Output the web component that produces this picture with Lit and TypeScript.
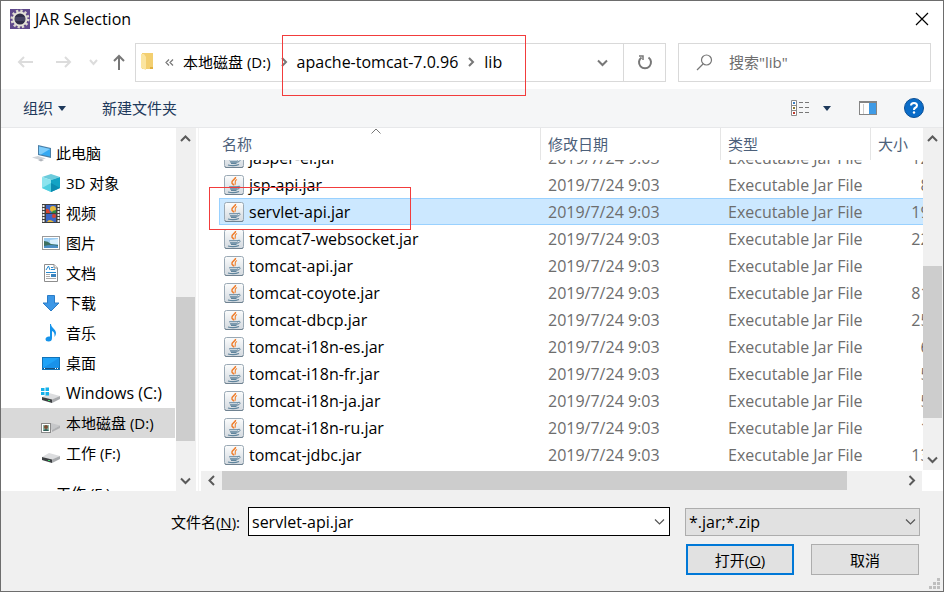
import { LitElement, html, css, svg } from "lit";
import { customElement } from "lit/decorators.js";
import { classMap } from "lit/directives/class-map.js";

const chevron = (d: string) =>
  html`<svg width="13" height="13" viewBox="0 0 13 13" fill="none" stroke="currentColor" stroke-width="2"><path d=${d} /></svg>`;

const UP = "M2 9 L6.5 4.5 L11 9";
const DOWN = "M2 4.5 L6.5 9 L11 4.5";
const LEFT = "M9 2 L4.5 6.5 L9 11";
const RIGHT = "M4.5 2 L9 6.5 L4.5 11";

const drive = svg`
  <path d="M0 13 L7 9 L18 12 L10 16 Z" fill="#dcdddf"/>
  <path d="M0 13 L10 15.5 V19 L0 16 Z" fill="#3d4043"/>
  <path d="M10 15.5 L18 12 V15 L10 19 Z" fill="#a9abae"/>
  <rect x="6" y="16" width="2" height="1" fill="#3fd46c"/>`;

const icons: Record<string, unknown> = {
  pc: svg`
    <path d="M6 1 L19 4 V14 L6 11 Z" fill="#4c7fa6"/>
    <path d="M7 2.5 L18 5 V12.5 L7 10 Z" fill="#35a9f2"/>
    <path d="M7 2.5 L18 5 L9 10.5 L7 10 Z" fill="#7fcdfb"/>
    <path d="M0 13.5 L6 12 L14 14.5 L8 16 Z" fill="#cfd3d8"/>
    <path d="M6 16 L9 15 L12 16 L9 17.5 Z" fill="#b0b4ba"/>`,
  cube: svg`
    <path d="M9 0 L18 3 L9 6 L0 3 Z" fill="#6ccbdc"/>
    <path d="M0 3 L9 6 V18 L0 14 Z" fill="#8ce4ee"/>
    <path d="M0 14 L9 9 V18 Z" fill="#4fcfe0"/>
    <path d="M9 6 L18 3 V14 L9 18 Z" fill="#12a3c4"/>
    <path d="M9 9 L18 14 L9 18 Z" fill="#0b8bb0"/>`,
  film: svg`
    <rect width="18" height="19" fill="#3f3f3f"/>
    <path d="M1.5 1V19M16.5 1V19" stroke="#f2f2f2" stroke-width="2" stroke-dasharray="2 1"/>
    <rect x="4" y="1" width="10" height="8" fill="#3c66c4"/>
    <rect x="4" y="10" width="10" height="8" fill="#3c66c4"/>
    <path d="M4 5 Q7 4 8 9 H4Z" fill="#d9432f"/>
    <circle cx="11" cy="5" r="3" fill="#e5b83a"/>
    <path d="M9 9H14V6Q11 6 9 9Z" fill="#2e8a45"/>
    <circle cx="12" cy="12" r="2" fill="#d9432f"/>
    <path d="M5 18Q7 14 12 18Z" fill="#e5b83a"/>`,
  picture: svg`
    <rect x="0.5" y="2.5" width="17" height="13" fill="#fff" stroke="#9a9a9a"/>
    <rect x="2" y="4" width="14" height="10" fill="#9ccdf3"/>
    <path d="M8 6 L16 5 V10 H8Z" fill="#d9effc"/>
    <path d="M2 7 Q6 7 9 10 L16 11 V12 H2 Z" fill="#3e7060"/>
    <path d="M2 12 Q9 10 16 12 V14 H2Z" fill="#4d8ec4"/>`,
  doc: svg`
    <path d="M2.5 0.5 H12 L15.5 4 V17.5 H2.5 Z" fill="#fff" stroke="#8d8d8d"/>
    <path d="M12 0.5 V4 H15.5" fill="#eee" stroke="#8d8d8d"/>
    <path d="M4 6 L6.5 2 L8 6 M9 3.5H11 M9 5.5H13 M4 8.5H14" stroke="#2489d0" fill="none"/>
    <path d="M4 10.5H8M4 12.5H8M4 14.5H14" stroke="#aaa"/>
    <rect x="9" y="10" width="5" height="3" fill="#3b83bd"/>`,
  down: svg`<path d="M5.5 1.5 H12.5 V9 H17 L9 17 L1 9 H5.5 Z" fill="#3c97e6" stroke="#2b7cc7"/>`,
  music: svg`<path d="M9 0 C9 4 14 5 14 9 Q14 11 12.5 13 Q13 8 10 7 V14 Q10 17.5 6.5 17.5 Q3.5 17.5 3.5 15 Q4 12 8 12.5 V0Z" fill="#1593ea"/>`,
  desktop: svg`
    <rect x="0.5" y="3.5" width="17" height="12" fill="#1fa3f8" stroke="#1173b8"/>
    <path d="M1 14 L17 4 V14Z" fill="#1992ea"/>
    <path d="M1 14.5H17" stroke="#174f7c"/>
    <path d="M2 14.5H3M13 14.5H14M15 14.5H16" stroke="#fff"/>`,
  winDrive: svg`${drive}
    <path d="M-1 4H2.5V7H-1ZM3.5 3.5H7V7H3.5ZM-1 8H2.5V11H-1ZM3.5 8H7V11.5H3.5Z" fill="#15b1ea"/>`,
  userDrive: svg`
    <path d="M4 12 L9 9 L18 11.5 L10 16 Z" fill="#c6c7c9"/>
    <path d="M10 16 L18 11.5 V14 L10 18 Z" fill="#b0b1b3"/>
    <rect x="-0.5" y="9.5" width="9" height="9" fill="#fff" stroke="#8a8a8a"/>
    <rect x="1" y="11" width="6" height="6" fill="#8fb6a6"/>
    <circle cx="4" cy="13" r="2" fill="#7b4d35"/>
    <path d="M1 17Q4 13 7 17Z" fill="#2f5d57"/>`,
  drive,
};

const places = [
  { name: "此电脑", icon: "pc", root: true },
  { name: "3D 对象", icon: "cube" },
  { name: "视频", icon: "film" },
  { name: "图片", icon: "picture" },
  { name: "文档", icon: "doc" },
  { name: "下载", icon: "down" },
  { name: "音乐", icon: "music" },
  { name: "桌面", icon: "desktop" },
  { name: "Windows (C:)", icon: "winDrive", latin: true },
  { name: "本地磁盘 (D:)", icon: "userDrive", selected: true },
  { name: "工作 (F:)", icon: "drive" },
  { name: "工作 (F:)", icon: "drive", root: true, spaced: true },
];

const files: [string, string][] = [
  ["jasper-el.jar", "123 KB"],
  ["jsp-api.jar", "87 KB"],
  ["servlet-api.jar", "194 KB"],
  ["tomcat7-websocket.jar", "225 KB"],
  ["tomcat-api.jar", "7 KB"],
  ["tomcat-coyote.jar", "815 KB"],
  ["tomcat-dbcp.jar", "253 KB"],
  ["tomcat-i18n-es.jar", "69 KB"],
  ["tomcat-i18n-fr.jar", "51 KB"],
  ["tomcat-i18n-ja.jar", "53 KB"],
  ["tomcat-i18n-ru.jar", "14 KB"],
  ["tomcat-jdbc.jar", "134 KB"],
];

const jarIcon = html`<svg width="20" height="20" viewBox="0 0 20 20" fill="none">
  <defs><linearGradient id="plate" x1="0" y1="0" x2="0" y2="1"><stop offset="0" stop-color="#fbfcfc" /><stop offset="1" stop-color="#d3d9df" /></linearGradient></defs>
  <rect x="0.5" y="0.5" width="19" height="19" rx="2" fill="url(#plate)" stroke="#9aa9b5" />
  <path d="M1 18.5Q1 19.5 2 19.5H18Q19 19.5 19 18.5" stroke="#6f8291" />
  <path d="M11.5 2C12 4.500 7 5 8 8C8.500 9.200 10 9.500 9.500 10.500" stroke="#ef7d2c" stroke-width="1.600" />
  <path d="M13 4.500C9.500 6 12.500 7.500 10.800 9.800" stroke="#f08a3c" stroke-width="1.200" />
  <path d="M5 11H14L13 15H6.500Z" fill="#7d9aae" />
  <path d="M6 12.500H13" stroke="#c9d5de" />
  <path d="M13.500 11.500Q16.500 10.500 16 12.500Q15.500 14 13 14.200" stroke="#5f849c" />
  <path d="M7 15.500H12.500M4 17Q10 18.500 15 16.500" stroke="#5f849c" stroke-width="1.200" />
</svg>`;

@customElement("app-root")
export class AppRoot extends LitElement {
  static styles = css`
    :host {
      display: block;
      height: 100vh;
      font: 15px/20px "Open Sans", "Noto Sans CJK SC", sans-serif;
      color: #000;
    }
    * { box-sizing: border-box; }
    svg { display: block; flex: none; overflow: visible; }
    button { font: inherit; color: inherit; border: 0; padding: 0; margin: 0; background: none; display: flex; align-items: center; }
    .latin { font-size: 16px; }
    .dialog { position: relative; display: flex; flex-direction: column; height: 100%; border: 1px solid #6d6d6d; background: #fff; overflow: hidden; }
    .title { display: flex; align-items: center; gap: 5px; height: 36px; padding: 0 14px 0 9px; flex: none; }
    h1 { font: inherit; font-size: 16px; margin: 0; flex: 1; }
    .nav { display: grid; grid-template-columns: 118px minmax(0, 531fr) 12px minmax(0, 253fr); align-items: center; height: 52px; padding: 0 12px 2px 16px; flex: none; }
    .history { display: flex; align-items: center; gap: 23px; color: #dcdcdc; }
    .history .recent { margin: 0 -8px 0 -6px; }
    .history .up { color: #777; }
    .field { display: flex; align-items: center; height: 39px; border: 1px solid #d9d9d9; }
    .address { padding-left: 4px; }
    .crumbs { display: flex; align-items: center; flex: 1; color: #777; white-space: nowrap; }
    .crumbs a { color: #000; text-decoration: none; }
    .crumbs .sep { margin: 0 8px; }
    .crumbs .more { margin: 0 9px 0 11px; }
    .address .drop { width: 41px; height: 100%; justify-content: center; color: #777; }
    .address .refresh { width: 42px; height: 100%; justify-content: center; border-left: 1px solid #d9d9d9; color: #777; }
    .search { grid-column: 4; padding-left: 17px; gap: 16px; }
    .search input { font: inherit; border: 0; outline: 0; padding: 0; min-width: 0; flex: 1; background: none; }
    .search input::placeholder { color: #6d6d6d; opacity: 1; }
    .toolbar { display: flex; align-items: center; height: 39px; padding: 0 19px 0 22px; background: #f5f6f7; border-bottom: 1px solid #e7e8ea; color: #1e395b; flex: none; }
    .toolbar .organize { gap: 5px; margin-right: 36px; }
    .toolbar .views { gap: 13px; margin-left: auto; margin-right: 28px; }
    .toolbar .pane { margin-right: 27px; }
    .main { display: flex; flex: 1; min-height: 0; }
    .tree { width: 174px; flex: none; overflow: hidden; padding-top: 10px; margin-right: 1px; }
    .tree ul { list-style: none; margin: 0; padding: 0; }
    .tree a { display: flex; align-items: center; gap: 6px; height: 30px; padding-left: 41px; color: #000; text-decoration: none; white-space: nowrap; }
    .tree .root { padding-left: 31px; }
    .tree .spaced { margin-top: 10px; }
    .tree .selected { background: #d9d9d9; }
    .vbar { width: 20px; flex: none; display: flex; flex-direction: column; background: #f0f0f0; color: #5a5a5a; }
    .vbar button { width: 19px; height: 20px; justify-content: center; flex: none; }
    .vbar button:last-child { height: 22px; }
    .track { flex: 1; display: flex; flex-direction: column; }
    .thumb { background: #cdcdcd; }
    .before-tree { flex: 149; }
    .thumb-tree { flex: 144; width: 19px; }
    .after-tree { flex: 28; }
    .before-list { flex: 118; }
    .thumb-list { flex: 152; width: 19px; }
    .after-list { flex: 30; }
    .list { flex: 1; min-width: 0; display: flex; flex-direction: column; margin-left: 2px; border-left: 1px solid #f3f3f3; }
    .rows { display: flex; flex: 1; min-height: 0; }
    .rows .vbar { margin-bottom: 1px; }
    .scroll { flex: 1; min-width: 0; overflow: hidden; padding: 0 1px 5px 20px; }
    table { width: calc(100% + 46px); table-layout: fixed; border-collapse: separate; border-spacing: 0; }
    th, td { padding: 0 0 0 7px; text-align: left; font-weight: 400; white-space: nowrap; }
    th { position: sticky; top: 0; z-index: 1; height: 32px; background: #fff; color: #4c607a; border-right: 1px solid #e5e5e5; }
    th:first-child { padding-left: 3px; }
    td { height: 27px; font-size: 16px; color: #6d6d6d; border: solid transparent; border-width: 1px 0; }
    td:first-child { color: #000; padding-left: 4px; border-left-width: 1px; }
    td:last-child { text-align: right; padding-right: 5px; }
    .chosen td { background: #cce8ff; border-color: #99d1ff; }
    .date { width: 180px; }
    .type { width: 150px; }
    .size { width: 97px; }
    .file { display: flex; align-items: center; gap: 5px; }
    .sort { position: absolute; top: 0; left: 49%; margin-left: -5px; color: #777; }
    .hbar { display: flex; height: 20px; margin-left: 2px; background: #f0f0f0; color: #5a5a5a; flex: none; }
    .hbar button { width: 21px; height: 19px; justify-content: center; flex: none; }
    .hbar .rail { flex: 1; display: flex; }
    .thumb-h { flex: 625; height: 19px; }
    .after-h { flex: 54; }
    .corner { width: 21px; background: #fff; }
    .footer { flex: none; height: 100px; padding: 16px 23px 16px 16px; background: #f0f0f0; display: flex; flex-direction: column; gap: 8px; }
    .entry { display: grid; grid-template-columns: 231px minmax(0, 422fr) minmax(0, 235fr); align-items: center; }
    .entry label { text-align: right; padding-right: 8px; }
    .combo { display: flex; align-items: center; height: 29px; border: 1px solid #000; background: #fff; padding: 0 4px 0 3px; color: #555; }
    .combo input { font: inherit; font-size: 16px; border: 0; outline: 0; padding: 0; flex: 1; min-width: 0; color: #000; background: none; }
    .filter { position: relative; height: 28px; color: #555; }
    .entry { column-gap: 0; grid-template-columns: 231px minmax(0, 422fr) 15px minmax(0, 235fr); }
    .entry .filter { grid-column: 4; }
    select { appearance: none; font: inherit; font-size: 16px; color: #000; width: 100%; height: 100%; padding: 0 3px; border: 1px solid #adadad; border-radius: 0; background: #e1e1e1; }
    .filter svg { position: absolute; right: 4px; top: 8px; pointer-events: none; }
    .actions { display: flex; justify-content: flex-end; gap: 17px; padding-right: 1px; }
    .push { width: 108px; height: 31px; justify-content: center; border: 1px solid #adadad; background: #e1e1e1; }
    .push.primary { border: 2px solid #0078d7; }
    .grip { position: absolute; right: 3px; bottom: 2px; }
    .mark { position: absolute; border: 1px solid #f23c3c; pointer-events: none; z-index: 2; }
    .mark-path { left: 281px; top: 34px; width: 244px; height: 61px; }
    .mark-file { left: 208px; top: 186px; width: 202px; height: 43px; }
  `;

  firstUpdated() {
    this.renderRoot.querySelector(".scroll")!.scrollTop = 16;
  }

  render() {
    return html`<div class="dialog">
      <header class="title">
        <svg width="20" height="20" viewBox="0 0 20 20">
          <rect width="20" height="20" fill="#60498c" />
          <circle cx="10" cy="10" r="8" fill="none" stroke="#ddd9cf" stroke-width="3" stroke-dasharray="2.2 2" />
          <circle cx="10" cy="10" r="6.5" fill="#302d48" stroke="#e4e1d8" stroke-width="2" />
          <path d="M5 9H15M5 11H15" stroke="#5c5a7c" />
        </svg>
        <h1>JAR Selection</h1>
        <button aria-label="关闭">
          <svg width="14" height="14" viewBox="0 0 14 14" stroke="#000" stroke-width="1.2"><path d="M1 1L13 13M13 1L1 13" /></svg>
        </button>
      </header>

      <nav class="nav">
        <div class="history">
          <button aria-label="后退"><svg width="16" height="14" viewBox="0 0 16 14" fill="none" stroke="currentColor" stroke-width="2"><path d="M16 7H2M7 2L2 7L7 12" /></svg></button>
          <button aria-label="前进"><svg width="16" height="14" viewBox="0 0 16 14" fill="none" stroke="currentColor" stroke-width="2"><path d="M0 7H14M9 2L14 7L9 12" /></svg></button>
          <button class="recent" aria-label="最近"><svg width="9" height="9" viewBox="0 0 9 9" fill="none" stroke="currentColor" stroke-width="2"><path d="M1 2L4.5 6L8 2" /></svg></button>
          <button class="up" aria-label="向上"><svg width="12" height="16" viewBox="0 0 12 16" fill="none" stroke="currentColor" stroke-width="2"><path d="M6 16V2M1 7L6 2L11 7" /></svg></button>
        </div>
        <div class="field address">
          <div class="crumbs">
            <svg width="14" height="18" viewBox="0 0 14 18"><path d="M2 0H13V16H2Z" fill="#f3cf70" /><path d="M1 1H4L6 4V17L1 15Z" fill="#fbe5a0" /><path d="M10 14H13V16H10Z" fill="#e0b040" /></svg>
            <svg class="more" width="9" height="7" viewBox="0 0 9 7" fill="none" stroke="currentColor" stroke-width="1.2"><path d="M4 0.5L1 3.5L4 6.5M8 0.5L5 3.5L8 6.5" /></svg>
            <a href="#d">本地磁盘 (D:)</a>
            <svg class="sep" width="10" height="10" viewBox="0 0 10 10" fill="none" stroke="currentColor" stroke-width="2"><path d="M3 1L7 5L3 9" /></svg>
            <a class="latin" href="#tomcat">apache-tomcat-7.0.96</a>
            <svg class="sep" width="10" height="10" viewBox="0 0 10 10" fill="none" stroke="currentColor" stroke-width="2"><path d="M3 1L7 5L3 9" /></svg>
            <a class="latin" href="#lib">lib</a>
          </div>
          <button class="drop" aria-label="以前的位置">${chevron(DOWN)}</button>
          <button class="refresh" aria-label="刷新">
            <svg width="16" height="16" viewBox="0 0 16 16" fill="none" stroke="currentColor" stroke-width="2"><path d="M11.5 3.5A6 6 0 1 1 4.5 3.5" /><path d="M2 2H6V6" stroke-width="1.5" /></svg>
          </button>
        </div>
        <div class="field search">
          <svg width="17" height="17" viewBox="0 0 17 17" fill="none" stroke="#777" stroke-width="1.2"><circle cx="10.5" cy="6" r="5" /><path d="M7 10L1 16" /></svg>
          <input type="search" aria-label="搜索" placeholder='搜索"lib"' />
        </div>
      </nav>

      <div class="toolbar">
        <button class="organize">组织 <svg width="8" height="5" viewBox="0 0 8 5"><path d="M0 0H8L4 5Z" fill="#1e395b" /></svg></button>
        <button>新建文件夹</button>
        <button class="views" aria-label="更改视图">
          <svg width="19" height="16" viewBox="0 0 19 16" fill="none">
            <path d="M0.5 0.5H5.5V15.5H0.5ZM0.5 5.5H5.5M0.5 10.5H5.5" stroke="#8b8b8b" fill="#fff" />
            <path d="M8 2.5H12M14 2.5H18M8 7.5H12M14 7.5H18M8 12.5H12M14 12.5H18" stroke="#777" />
            <path d="M2 3H4" stroke="#3c7fc0" stroke-width="2" /><path d="M2 8H4" stroke="#8a7a30" stroke-width="2" /><path d="M2 13H4" stroke="#c0392b" stroke-width="2" />
          </svg>
          <svg width="8" height="5" viewBox="0 0 8 5"><path d="M0 0H8L4 5Z" fill="#1e395b" /></svg>
        </button>
        <button class="pane" aria-label="预览窗格">
          <svg width="18" height="14" viewBox="0 0 18 14"><rect x="0.5" y="0.5" width="17" height="13" fill="#fff" stroke="#858585" /><path d="M0 1.5H18" stroke="#858585" /><path d="M4.5 3V13" stroke="#ccc" /><rect x="10" y="2" width="7" height="11" fill="#3f9be6" /></svg>
        </button>
        <button aria-label="帮助">
          <svg width="20" height="20" viewBox="0 0 20 20"><circle cx="10" cy="10" r="9.5" fill="#0a6cc8" stroke="#0a4f96" /><path d="M7 7.5Q7 5 10 5Q13 5 13 7.5Q13 9 11 10Q10 10.5 10 12" fill="none" stroke="#fff" stroke-width="2" /><circle cx="10" cy="14.5" r="1.2" fill="#fff" /></svg>
        </button>
      </div>

      <div class="main">
        <nav class="tree"><ul>
          ${places.map((p) => html`<li><a href="#place" class=${classMap({ root: !!p.root, selected: !!p.selected, spaced: !!p.spaced, latin: !!p.latin })}>
            <svg width="18" height="19" viewBox="0 0 18 19">${icons[p.icon]}</svg><span>${p.name}</span></a></li>`)}
        </ul></nav>
        <div class="vbar">
          <button aria-label="向上滚动">${chevron(UP)}</button>
          <div class="track"><div class="before-tree"></div><div class="thumb thumb-tree"></div><div class="after-tree"></div></div>
          <button aria-label="向下滚动">${chevron(DOWN)}</button>
        </div>
        <section class="list">
          <div class="rows">
            <div class="scroll">
              <table>
                <thead><tr>
                  <th>名称<svg class="sort" width="10" height="6" viewBox="0 0 10 6" fill="none" stroke="currentColor"><path d="M0.5 5.5L5 1L9.5 5.5" /></svg></th>
                  <th class="date">修改日期</th><th class="type">类型</th><th class="size">大小</th>
                </tr></thead>
                <tbody>
                  ${files.map(([name, size]) => html`<tr class=${classMap({ chosen: name === "servlet-api.jar" })}>
                    <td><span class="file">${jarIcon}${name}</span></td><td>2019/7/24 9:03</td><td>Executable Jar File</td><td>${size}</td>
                  </tr>`)}
                </tbody>
              </table>
            </div>
            <div class="vbar">
              <button aria-label="向上滚动">${chevron(UP)}</button>
              <div class="track"><div class="before-list"></div><div class="thumb thumb-list"></div><div class="after-list"></div></div>
              <button aria-label="向下滚动">${chevron(DOWN)}</button>
            </div>
          </div>
          <div class="hbar">
            <button aria-label="向左滚动">${chevron(LEFT)}</button>
            <div class="rail"><div class="thumb thumb-h"></div><div class="after-h"></div></div>
            <button aria-label="向右滚动">${chevron(RIGHT)}</button>
            <div class="corner"></div>
          </div>
        </section>
      </div>

      <footer class="footer">
        <div class="entry">
          <label for="name">文件名(<u>N</u>):</label>
          <div class="combo"><input id="name" type="text" .value=${"servlet-api.jar"} />
            <svg width="11" height="11" viewBox="0 0 11 11" fill="none" stroke="currentColor" stroke-width="1.2"><path d="M1 3.5L5.5 8L10 3.5" /></svg></div>
          <div class="filter"><select aria-label="文件类型"><option>*.jar;*.zip</option></select>
            <svg width="11" height="11" viewBox="0 0 11 11" fill="none" stroke="currentColor" stroke-width="1.2"><path d="M1 3.5L5.5 8L10 3.5" /></svg></div>
        </div>
        <div class="actions">
          <button class="push primary"><span>打开(<u>O</u>)</span></button>
          <button class="push">取消</button>
        </div>
      </footer>
      <svg class="grip" width="11" height="11" viewBox="0 0 11 11" fill="#bfbfbf"><path d="M8 0h3v3h-3zM4 4h3v3h-3zM8 4h3v3h-3zM0 8h3v3h-3zM4 8h3v3h-3zM8 8h3v3h-3z" /></svg>
      <div class="mark mark-path"></div>
      <div class="mark mark-file"></div>
    </div>`;
  }
}
